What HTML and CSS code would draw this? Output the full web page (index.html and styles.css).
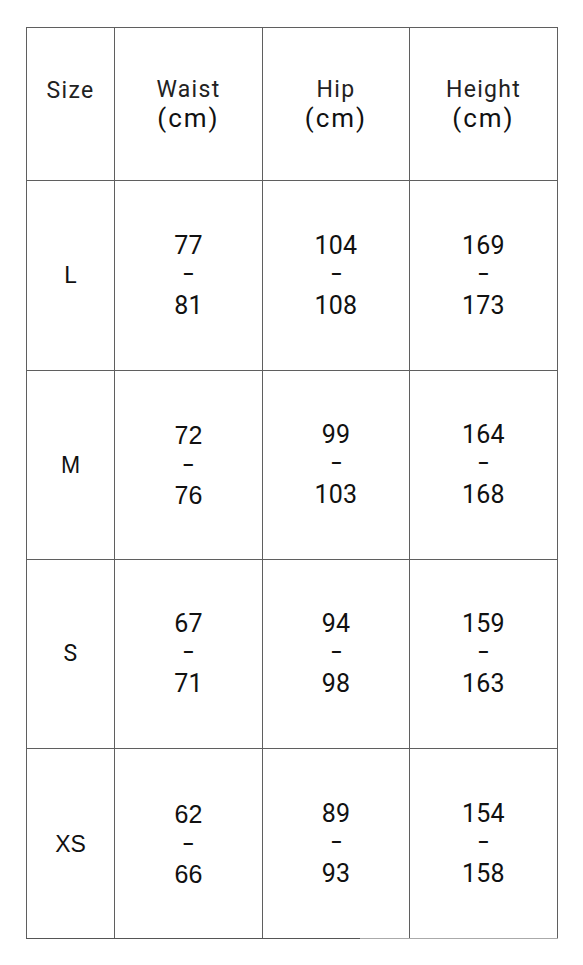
FILE: index.html
```html
<!DOCTYPE html>
<html>
<head>
<meta charset="utf-8">
<link rel="stylesheet" href="styles.css">
</head>
<body>
<div class="wrap">
  <div class="table">
    <div class="cell head size-head"><span class="h1">Size</span></div>
    <div class="cell head"><span class="h1">Waist</span><span class="h2">(cm)</span></div>
    <div class="cell head"><span class="h1">Hip</span><span class="h2">(cm)</span></div>
    <div class="cell head"><span class="h1">Height</span><span class="h2">(cm)</span></div>

    <div class="cell row"><span class="sz">L</span></div>
    <div class="cell row"><span>77</span><span class="dash">-</span><span>81</span></div>
    <div class="cell row"><span>104</span><span class="dash">-</span><span>108</span></div>
    <div class="cell row"><span>169</span><span class="dash">-</span><span>173</span></div>

    <div class="cell row arial"><span class="sz">M</span></div>
    <div class="cell row arial"><span>72</span><span class="dash">-</span><span>76</span></div>
    <div class="cell row"><span>99</span><span class="dash">-</span><span>103</span></div>
    <div class="cell row"><span>164</span><span class="dash">-</span><span>168</span></div>

    <div class="cell row"><span class="sz">S</span></div>
    <div class="cell row"><span>67</span><span class="dash">-</span><span>71</span></div>
    <div class="cell row"><span>94</span><span class="dash">-</span><span>98</span></div>
    <div class="cell row"><span>159</span><span class="dash">-</span><span>163</span></div>

    <div class="cell row arial last"><span class="sz">XS</span></div>
    <div class="cell row arial last"><span>62</span><span class="dash">-</span><span>66</span></div>
    <div class="cell row last"><span>89</span><span class="dash">-</span><span>93</span></div>
    <div class="cell row last"><span>154</span><span class="dash">-</span><span>158</span></div>
  </div>
  <div class="bottom-line"></div>
</div>
</body>
</html>
```

FILE: styles.css
```css
html, body {
  margin: 0;
  padding: 0;
  background: #ffffff;
}

body {
  font-family: Roboto, "Liberation Sans", sans-serif;
  color: #111111;
}

.wrap {
  padding: 27px 0 0 26px;
  width: 532px;
}

.table {
  display: grid;
  grid-template-columns: 88px 148px 147px 148px;
  grid-template-rows: 153px 190px 189px 189px 189px;
  border-top: 1px solid #5f5f5f;
  border-left: 1px solid #5f5f5f;
  width: 532px;
  box-sizing: border-box;
}

.cell {
  border-right: 1px solid #5f5f5f;
  border-bottom: 1px solid #5f5f5f;
  display: flex;
  flex-direction: column;
  align-items: center;
  justify-content: center;
  text-align: center;
}

.cell.last {
  border-bottom: none;
}

.head .h1 {
  font-size: 23px;
  line-height: 27px;
  letter-spacing: 1.3px;
  color: #222222;
}

.head .h2 {
  font-size: 26px;
  line-height: 30px;
  letter-spacing: 2px;
}

.size-head {
  padding-bottom: 28px;
}

.row span {
  font-size: 25px;
  line-height: 30px;
  letter-spacing: 0.2px;
}

.row .dash {
  display: inline-block;
  transform: translateY(-2px) scaleX(1.5);
  letter-spacing: 0;
}

.row .sz {
  font-size: 23px;
}

.arial span {
  font-family: "Liberation Sans", Arial, sans-serif;
  font-size: 25px;
  letter-spacing: 0;
}

.bottom-line {
  height: 1px;
  width: 532px;
  background: linear-gradient(to right, #555555 0, #555555 334px, #aaaaaa 334px, #aaaaaa 100%);
}
```
